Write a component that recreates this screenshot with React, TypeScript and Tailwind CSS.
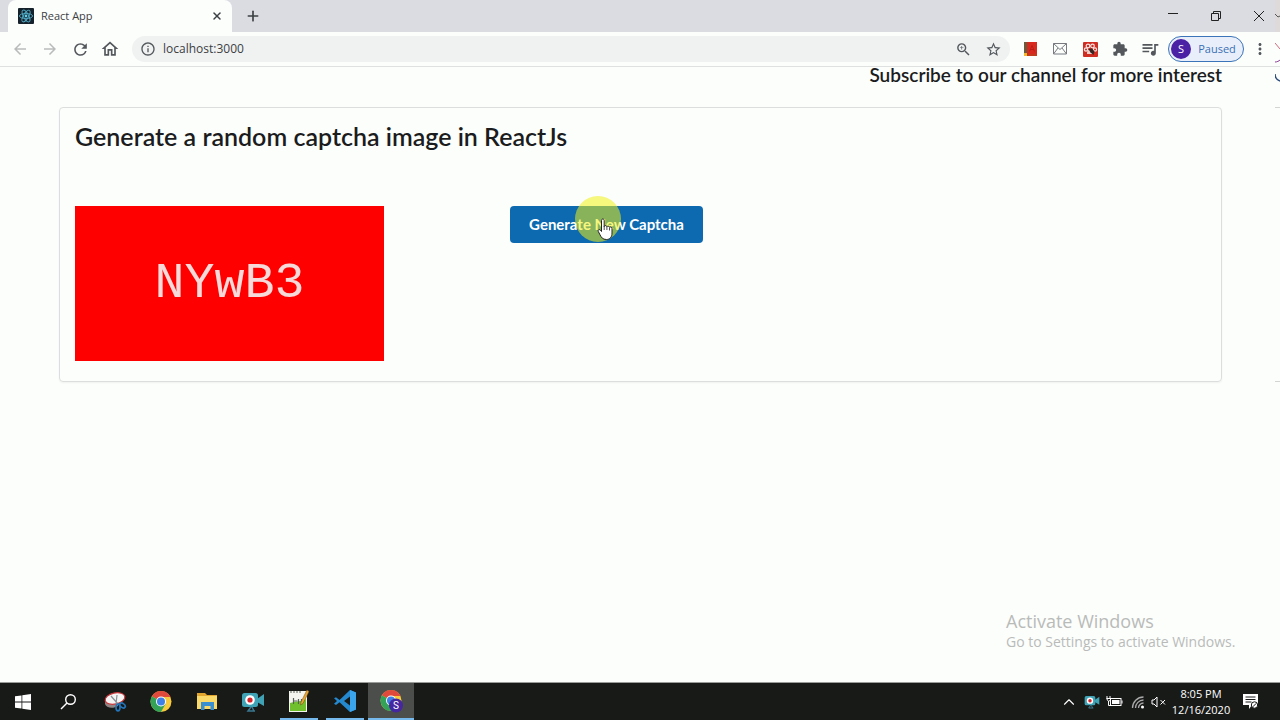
import { useState } from 'react';
import type { ReactNode } from 'react';
import {
  MdArrowBack,
  MdArrowForward,
  MdExtension,
  MdInfoOutline,
  MdMoreVert,
  MdOutlineHome,
  MdQueueMusic,
  MdRefresh,
  MdStarBorder,
  MdZoomIn,
} from 'react-icons/md';
import { ChevronUp, Plus, X } from 'lucide-react';

const CHARS = 'ABCDEFGHJKLMNPQRSTUVWXYZabcdefghijkmnpqrstuvwxyz23456789';

const randomCaptcha = () =>
  Array.from({ length: 5 }, () => CHARS[Math.floor(Math.random() * CHARS.length)]).join('');

function ReactLogo() {
  return (
    <svg width="16" height="16" viewBox="0 0 16 16">
      <rect width="16" height="16" rx="1" fill="#16222b" />
      <g fill="none" stroke="#4fa9c4" strokeWidth="0.9">
        <ellipse cx="8" cy="8" rx="6.6" ry="2.6" />
        <ellipse cx="8" cy="8" rx="6.6" ry="2.6" transform="rotate(60 8 8)" />
        <ellipse cx="8" cy="8" rx="6.6" ry="2.6" transform="rotate(120 8 8)" />
      </g>
      <circle cx="8" cy="8" r="1.4" fill="#5fd0ee" />
    </svg>
  );
}

function BookIcon() {
  return (
    <svg width="14" height="16" viewBox="0 0 14 16">
      <rect x="1" y="1" width="13" height="14" fill="#d8291f" />
      <rect x="1" y="1" width="3" height="12" fill="#6b5a3c" />
      <path d="M1 12h3v3H1z" fill="#f0b92c" />
      <path d="M4 13h10v2H4z" fill="#c43a1c" />
      <path d="M6.5 10.5 9 4.5l2.5 6M7.5 8.5h3" fill="none" stroke="#b81d15" />
    </svg>
  );
}

function MailIcon() {
  return (
    <svg width="14" height="12" viewBox="0 0 14 12" fill="none" stroke="#777b80">
      <path d="M.5.5h13v10.5H.5zM.5.5 7 6.5 13.5.5M.5 11 5 5M13.5 11 9 5" />
    </svg>
  );
}

function PawIcon() {
  return (
    <svg width="15" height="15" viewBox="0 0 15 15">
      <rect width="15" height="15" rx="1" fill="#cf2c22" />
      <g fill="none" stroke="#f7e4e2" strokeWidth="1.2">
        <circle cx="5" cy="4" r="1.8" />
        <circle cx="9.5" cy="4" r="1.8" />
        <circle cx="3" cy="7.5" r="1.6" />
        <circle cx="12" cy="7.5" r="1.6" />
      </g>
      <path d="M4 12c-.5-2.5 1-4.5 3.5-4.5S11 9 11 12z" fill="#f3cfca" />
      <path d="m5.5 7 3.5-.5 2.5 3-1 3.5-3-2.5z" fill="#3a2420" />
    </svg>
  );
}

function WindowsIcon() {
  return (
    <svg width="16" height="16" viewBox="0 0 16 16" fill="#fff">
      <path d="M0 2.3 6.5 1.4v6.2H0zM7.3 1.3 16 0v7.6H7.3zM0 8.4h6.5v6.2L0 13.7zM7.3 8.4H16V16l-8.7-1.3z" />
    </svg>
  );
}

function SearchIcon() {
  return (
    <svg width="18" height="18" viewBox="0 0 18 18" fill="none" stroke="#fff" strokeWidth="1.4">
      <circle cx="10.5" cy="6.5" r="4.8" />
      <path d="M7 10 1 16" />
    </svg>
  );
}

function SnipIcon() {
  return (
    <svg width="24" height="22" viewBox="0 0 24 22">
      <path d="M2 9v4c1 4 8 5 13 2V8z" fill="#8f8585" />
      <ellipse cx="12" cy="7.5" rx="10" ry="5.5" transform="rotate(-12 12 7.5)" fill="#f5f5f5" stroke="#c9383c" strokeWidth="1.2" />
      <path d="m8 5 7 8M14 4l-1 9" stroke="#8b9096" strokeWidth="1.2" fill="none" />
      <g fill="none" stroke="#2374b8" strokeWidth="1.7">
        <ellipse cx="15" cy="16.5" rx="2" ry="3.3" />
        <ellipse cx="19.5" cy="14.5" rx="3" ry="2" transform="rotate(35 19.5 14.5)" />
      </g>
    </svg>
  );
}

function ChromeIcon({ badge = false }: { badge?: boolean }) {
  return (
    <svg width="24" height="24" viewBox="0 0 24 24">
      <circle cx="12" cy="11.5" r="10.5" fill="#f8cb3e" />
      <path d="M12 11.5 2.9 6.25A10.5 10.5 0 0 1 21.1 6.25L21.3 7H12z" fill="#e04a3c" />
      <path d="M2.9 6.25A10.5 10.5 0 0 0 12 22l4.5-8-4.5-2.5z" fill="#35a357" />
      <circle cx="12" cy="11.5" r="5" fill="#fff" />
      <circle cx="12" cy="11.5" r="4" fill="#3f80e8" />
      {badge && (
        <>
          <circle cx="17" cy="16.5" r="7" fill="#4527a0" />
          <text x="17" y="20" textAnchor="middle" fontSize="10" fill="#fff" fontFamily="Roboto, sans-serif">S</text>
        </>
      )}
    </svg>
  );
}

function FolderIcon() {
  return (
    <svg width="22" height="20" viewBox="0 0 22 20">
      <path d="M1 1h8l2 2h10v14H1z" fill="#e2a52e" />
      <path d="M1 4h20v13H1z" fill="#fbd968" />
      <path d="M5 10h13v8h-3.5v-4h-6v4H5z" fill="#3a8fd0" />
    </svg>
  );
}

function CameraIcon({ size = 24 }: { size?: number }) {
  return (
    <svg width={size} height={size} viewBox="0 0 24 24">
      <rect x="1" y="3" width="16" height="14" rx="2.5" fill="#3fa3b5" />
      <path d="m16 9 7-5v12l-7-4z" fill="#3fa3b5" />
      <circle cx="9" cy="10" r="4.8" fill="#fff" />
      <circle cx="9" cy="10" r="2.6" fill="#d8232a" />
      <path d="m10 17-3 4h7m-3-4 2 4" stroke="#3a7890" strokeWidth="1.5" fill="none" />
    </svg>
  );
}

function NotepadIcon() {
  return (
    <svg width="22" height="24" viewBox="0 0 22 24">
      <path d="M1 2h18v21H1z" fill="#f3f5ee" />
      <path d="M2 14c5-2 11-1 16-4v12H2z" fill="#6fc02c" />
      <path d="M3 2v2m3-2v2m3-2v2m3-2v2" stroke="#5c6158" />
      <path d="M5.5 9v6m0-3h4m1-2v5m3-5v4" stroke="#59605a" strokeWidth="1.2" fill="none" />
      <path d="m19 1 2 1.5-6 12-2.5 1.5.5-3z" fill="#e8a534" stroke="#6b4a1c" strokeWidth=".5" />
    </svg>
  );
}

function VsCodeIcon() {
  return (
    <svg width="24" height="24" viewBox="0 0 24 24">
      <path d="M17 1 6.5 11 3 8.2 1 9.2 4 12l-3 2.8 2 1.2 3.5-2.8L17 23l6-2.5v-17zM17 7.5v9L11 12z" fill="#2489cf" fillRule="evenodd" />
      <path d="m17 1 6 2.5v17L17 23z" fill="#3aa4ec" />
    </svg>
  );
}

function BatteryIcon() {
  return (
    <svg width="17" height="13" viewBox="0 0 17 13" fill="none" stroke="#fff">
      <rect x="4.5" y="3.5" width="10.5" height="7" />
      <path d="M6 5h7.5v4H6z" fill="#fff" stroke="none" />
      <path d="M16 5.5v3M1 1v2m3-2v2M.5 3.5h4V5l-2 1.5zM2.5 6v4.5H5" />
    </svg>
  );
}

function WifiIcon() {
  return (
    <svg width="14" height="14" viewBox="0 0 14 14" fill="none" stroke="#aaa" strokeWidth="1.3">
      <path d="M1.5 13A11 11 0 0 1 12.5 2M4.5 13a8 8 0 0 1 8-8M7.5 13a5 5 0 0 1 5-5" />
      <circle cx="11.5" cy="12" r="1.5" fill="#fff" stroke="none" />
    </svg>
  );
}

function MuteIcon() {
  return (
    <svg width="16" height="12" viewBox="0 0 16 12" fill="none" stroke="#fff">
      <path d="M1 4h2l3-3v10L3 8H1zM9.5 4l4.5 4.5M14 4 9.5 8.5" />
    </svg>
  );
}

function NoticeIcon() {
  return (
    <svg width="17" height="17" viewBox="0 0 17 17">
      <path d="M1 1h15v11h-6l-3 4v-4H1z" fill="#fff" />
      <path d="M3.5 4h10M3.5 6.5h10M3.5 9h6" stroke="#181a18" />
      <circle cx="12.5" cy="12" r="3.2" fill="#fff" stroke="#181a18" />
      <path d="m10.8 13.8 3.5-3.5" stroke="#181a18" />
    </svg>
  );
}

function HandCursor() {
  return (
    <svg width="18" height="23" viewBox="0 0 18 23" className="pointer-events-none absolute left-[87px] top-3">
      <path
        d="M4.5 2.5c0-2 2.7-2 2.7 0v6c.4-1.4 2.5-1.2 2.7.3.6-1 2.4-.8 2.6.6.8-.8 2.5-.4 2.5 1.2V15c0 4-2 6.5-5.5 6.5-4 0-5-2-6.5-4.7L1.3 13.5c-.8-1.8 1.2-2.5 2.2-1.2l1 1.2z"
        fill="#fff"
        stroke="#222"
      />
      <path d="M7.2 8v4m2.7-3v3m2.6-2v2.5" stroke="#222" strokeWidth=".8" />
    </svg>
  );
}

// thin strip of the neighbouring window at the right edge of the screen
function EdgeStrip() {
  return (
    <svg width="5" height="400" viewBox="0 0 5 400" fill="none" className="pointer-events-none absolute right-0 top-0">
      <path d="M0 0h5v32H0z" fill="#dedad9" />
      <path d="m0 14 3 3 2-1" stroke="#555" />
      <path d="m0 43 5 6" stroke="#d06a7c" />
      <path d="M0 62c2 0 4-1 5-2" stroke="#8a3a92" />
      <path d="M0 74c0 3 2 6 5 7" stroke="#2c4a78" strokeWidth="1.5" />
      <path d="M0 107.5h5M0 381.5h5" stroke="#d4d4d5" />
    </svg>
  );
}

function NavButton({ label, children }: { label: string; children: ReactNode }) {
  return (
    <button aria-label={label} className="flex h-7 w-[30px] items-center justify-center">
      {children}
    </button>
  );
}

const TASKS = [
  { label: 'Start', icon: <WindowsIcon />, state: '' },
  { label: 'Search', icon: <SearchIcon />, state: '' },
  { label: 'Snipping Tool', icon: <SnipIcon />, state: '' },
  { label: 'Chrome', icon: <ChromeIcon />, state: '' },
  { label: 'Explorer', icon: <FolderIcon />, state: '' },
  { label: 'Recorder', icon: <CameraIcon />, state: '' },
  { label: 'Notepad++', icon: <NotepadIcon />, state: 'open' },
  { label: 'VS Code', icon: <VsCodeIcon />, state: 'open' },
  { label: 'Chrome profile', icon: <ChromeIcon badge />, state: 'active' },
];

function TabStrip() {
  return (
    <div className="flex h-8 items-stretch bg-[#dadce1] pl-2 text-[#3c4043]">
      <div className="flex w-56 items-center rounded-t-lg bg-[#fcfefc] pl-[10px] pr-2">
        <ReactLogo />
        <span className="ml-[7px] flex-1 text-[11px]">React App</span>
        <button aria-label="Close tab" className="flex w-[14px] justify-center">
          <X size={12} strokeWidth={3} />
        </button>
      </div>
      <button aria-label="New tab" className="flex w-[42px] items-center justify-center">
        <Plus size={16} strokeWidth={2.5} />
      </button>
      <div className="ml-auto flex items-center text-[#222]">
        <button aria-label="Minimize" className="flex h-7 w-[43px] items-center justify-center">
          <svg width="10" height="10" stroke="currentColor"><path d="M0 2.5h10" /></svg>
        </button>
        <button aria-label="Restore" className="flex h-7 w-[43px] items-center justify-center">
          <svg width="10" height="10" fill="none" stroke="currentColor"><path d="M.5 2.5h7v7h-7zM2.5 2.5v-2h7v7h-2" /></svg>
        </button>
        <button aria-label="Close" className="flex h-7 w-[43px] items-center justify-center">
          <svg width="10" height="10" stroke="currentColor"><path d="m0 0 10 10M10 0 0 10" /></svg>
        </button>
      </div>
    </div>
  );
}

function Toolbar() {
  return (
    <div className="flex h-[35px] items-center border-b border-[#dfe1e0] bg-[#fcfefc] pl-[5px] pr-1 text-[#54585c]">
      <NavButton label="Back"><MdArrowBack size={18} className="text-[#b9bbbb]" /></NavButton>
      <NavButton label="Forward"><MdArrowForward size={18} className="text-[#b9bbbb]" /></NavButton>
      <NavButton label="Reload"><MdRefresh size={19} /></NavButton>
      <NavButton label="Home"><MdOutlineHome size={20} /></NavButton>

      <div className="ml-[7px] mr-[5px] flex h-[26px] flex-1 items-center rounded-full bg-[#f0f2f2] pl-2">
        <MdInfoOutline size={16} />
        <input
          aria-label="Address"
          defaultValue="localhost:3000"
          className="ml-[7px] min-w-0 flex-1 bg-transparent text-[12px] text-[#3c4043] outline-none"
        />
        <NavButton label="Zoom"><MdZoomIn size={17} /></NavButton>
        <NavButton label="Bookmark"><MdStarBorder size={17} /></NavButton>
        <span className="w-[2px]" />
      </div>

      <NavButton label="Dictionary"><BookIcon /></NavButton>
      <NavButton label="Mail"><MailIcon /></NavButton>
      <NavButton label="Paw"><PawIcon /></NavButton>
      <NavButton label="Extensions"><MdExtension size={16} /></NavButton>
      <NavButton label="Media"><MdQueueMusic size={20} /></NavButton>

      <button className="ml-[3px] flex h-[26px] w-[76px] items-center rounded-full border border-[#3b74b8] bg-[#e9effa] pl-[2px] text-[#3a6fb5]">
        <span className="flex size-5 items-center justify-center rounded-full bg-[#4a20a5] text-[11px] text-white">S</span>
        <span className="flex-1 text-center text-[11px]">Paused</span>
      </button>
      <button aria-label="Menu" className="flex w-8 justify-center"><MdMoreVert size={18} /></button>
    </div>
  );
}

function Taskbar() {
  return (
    <div className="flex h-[38px] items-stretch border-t border-[#9a9c9a] bg-[#181a18] text-white">
      {TASKS.map((t) => (
        <button
          key={t.label}
          aria-label={t.label}
          className={
            t.state === 'active'
              ? 'flex w-[46px] items-center justify-center border-b-2 border-[#76b9ed] bg-[#4c4e4c]'
              : t.state === 'open'
                ? 'mx-1 flex w-[38px] items-center justify-center border-b-2 border-[#76b9ed]'
                : 'flex w-[46px] items-center justify-center'
          }
        >
          {t.icon}
        </button>
      ))}
      <div className="ml-auto flex items-center">
        <button aria-label="Hidden icons" className="flex w-[22px] justify-center"><ChevronUp size={18} strokeWidth={1.5} /></button>
        <button aria-label="Recorder status" className="flex w-[23px] justify-center"><CameraIcon size={16} /></button>
        <button aria-label="Battery" className="flex w-[23px] justify-center"><BatteryIcon /></button>
        <button aria-label="Network" className="flex w-[23px] justify-center"><WifiIcon /></button>
        <button aria-label="Volume" className="flex w-[20px] justify-center"><MuteIcon /></button>
        <div className="w-16 text-center text-[11px] leading-4">
          <p>8:05 PM</p>
          <p>12/16/2020</p>
        </div>
        <button aria-label="Notifications" className="mr-[13px] flex w-[34px] justify-center"><NoticeIcon /></button>
      </div>
    </div>
  );
}

export default function App() {
  const [captcha, setCaptcha] = useState('NYwB3');

  return (
    <div className="relative flex min-h-screen flex-col bg-[#fcfefc] font-['Open_Sans',sans-serif]">
      <TabStrip />
      <Toolbar />

      <main className="flex flex-1 flex-col pl-[59px] pr-[58px] font-['Lato',sans-serif] text-[#1b1c1d]">
        <p className="h-10 self-end whitespace-nowrap text-[19px] font-semibold leading-4">
          Subscribe to our channel for more interest
        </p>

        <section className="rounded border border-[#dcdddd] px-[15px] pb-5 pt-3 shadow-xs">
          <h2 className="text-[25px] font-semibold leading-8">Generate a random captcha image in ReactJs</h2>
          <div className="mt-[54px] grid grid-cols-[5fr_8fr] items-start">
            <div className="flex h-[155px] w-[309px] items-center justify-center bg-[#fe0000] font-['Liberation_Mono',monospace] text-[50px] text-[#f6dada]">
              {captcha}
            </div>
            <div>
              <button
                onClick={() => setCaptcha(randomCaptcha())}
                className="relative h-[37px] w-[193px] rounded bg-[#0d69b0] text-[15px] font-bold text-white"
              >
                Generate New Captcha
                <span className="pointer-events-none absolute -top-[10px] left-[65px] size-[46px] rounded-full bg-[#f0f014]/55" />
                <HandCursor />
              </button>
            </div>
          </div>
        </section>

        <div className="mb-[30px] mt-auto w-[216px] self-end font-['Open_Sans',sans-serif] text-[#b9bbb9]">
          <p className="text-[18px] leading-[22px]">Activate Windows</p>
          <p className="whitespace-nowrap text-[14px] leading-5">Go to Settings to activate Windows.</p>
        </div>
      </main>

      <Taskbar />
      <EdgeStrip />
    </div>
  );
}
